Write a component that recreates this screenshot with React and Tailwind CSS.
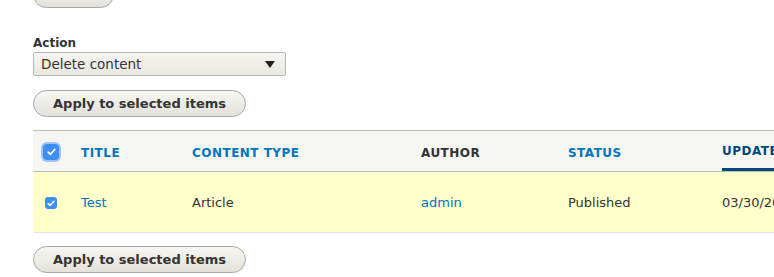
import React from 'react'

const font = { fontFamily: '"DejaVu Sans", "Liberation Sans", sans-serif' }

function Button({ children, className = '' }) {
  return (
    <button
      className={`block h-[27px] rounded-full border border-[#a6a6a6] bg-gradient-to-b from-[#f7f6f2] to-[#e3e1da] text-[13px] font-bold text-[#333] ${className}`}
    >
      {children}
    </button>
  )
}

function Check({ big }) {
  if (big) {
    return (
      <span className="flex h-[16px] w-[16px] items-center justify-center rounded-[4px] bg-[#3d8ef2] shadow-[0_0_0_2px_#9ec4f7]">
        <svg width="9" height="8" viewBox="0 0 9 8">
          <path d="M1.2 4.2 L3.4 6.3 L7.8 1.4" fill="none" stroke="white" strokeWidth="1.7" strokeLinecap="round" strokeLinejoin="round" />
        </svg>
      </span>
    )
  }
  return (
    <span className="flex h-[12px] w-[12px] items-center justify-center rounded-[3px] bg-[#3d8ef2]">
      <svg width="8" height="7" viewBox="0 0 9 8">
        <path d="M1.2 4.2 L3.4 6.3 L7.8 1.4" fill="none" stroke="white" strokeWidth="1.8" strokeLinecap="round" strokeLinejoin="round" />
      </svg>
    </span>
  )
}

export default function App() {
  return (
    <div className="h-[277px] w-[774px] overflow-hidden bg-white pl-[33px] text-[#333]" style={font}>
      {/* cut-off filter button */}
      <Button className="-mt-[19px] w-[81px] leading-none">Filter</Button>

      <div className="mt-[27px] text-[12px] font-bold leading-[16px] text-[#333]">Action</div>
      <div className="mt-[1px] flex h-[24px] w-[253px] items-center justify-between rounded-[2px] border border-[#b8b8b8] bg-gradient-to-b from-[#f6f5f1] to-[#e8e7e2] pl-[7px] pr-[10px] text-[13.5px]">
        <span>Delete content</span>
        <svg width="10" height="7" viewBox="0 0 10 7">
          <path d="M0 0 H10 L5 7 Z" fill="#222" />
        </svg>
      </div>

      <Button className="mt-[14px] w-[213px]">Apply to selected items</Button>

      <table className="mt-[13px] w-[900px] table-fixed border-collapse text-[13px]">
        <colgroup>
          <col className="w-[36px]" />
          <col className="w-[111px]" />
          <col className="w-[229px]" />
          <col className="w-[147px]" />
          <col className="w-[154px]" />
          <col />
        </colgroup>
        <thead>
          <tr className="h-[41px] border-y border-[#bfbfba] bg-[#f5f5f2] text-[12px] font-bold uppercase tracking-[0.04em]">
            <th className="pl-[10px] pt-[2px] text-left">
              <Check big />
            </th>
            <th className="pl-[12px] pt-[3px] text-left text-[#0074bd]">Title</th>
            <th className="pl-[12px] pt-[3px] text-left text-[#0074bd]">Content type</th>
            <th className="pl-[12px] pt-[3px] text-left text-[#333]">Author</th>
            <th className="pl-[12px] pt-[3px] text-left text-[#0074bd]">Status</th>
            <th className="pl-[12px] text-left text-[#004875]">
              <div className="flex h-[39px] flex-col justify-end">
                <span className="pb-[8px]">Updated</span>
                <span className="h-[3px] bg-[#004875]" />
              </div>
            </th>
          </tr>
        </thead>
        <tbody>
          <tr className="h-[61px] border-b border-[#e6e4df] bg-[#ffffcc]">
            <td className="pl-[12px] pt-[2px]">
              <Check />
            </td>
            <td className="pl-[12px] pt-[2px] text-[#0074bd]">Test</td>
            <td className="pl-[12px] pt-[2px]">Article</td>
            <td className="pl-[12px] pt-[2px] text-[#0074bd]">admin</td>
            <td className="pl-[12px] pt-[2px]">Published</td>
            <td className="whitespace-nowrap pl-[12px] pt-[2px]">03/30/2016 - 10:21</td>
          </tr>
        </tbody>
      </table>

      <Button className="mt-[13px] w-[213px]">Apply to selected items</Button>
    </div>
  )
}
